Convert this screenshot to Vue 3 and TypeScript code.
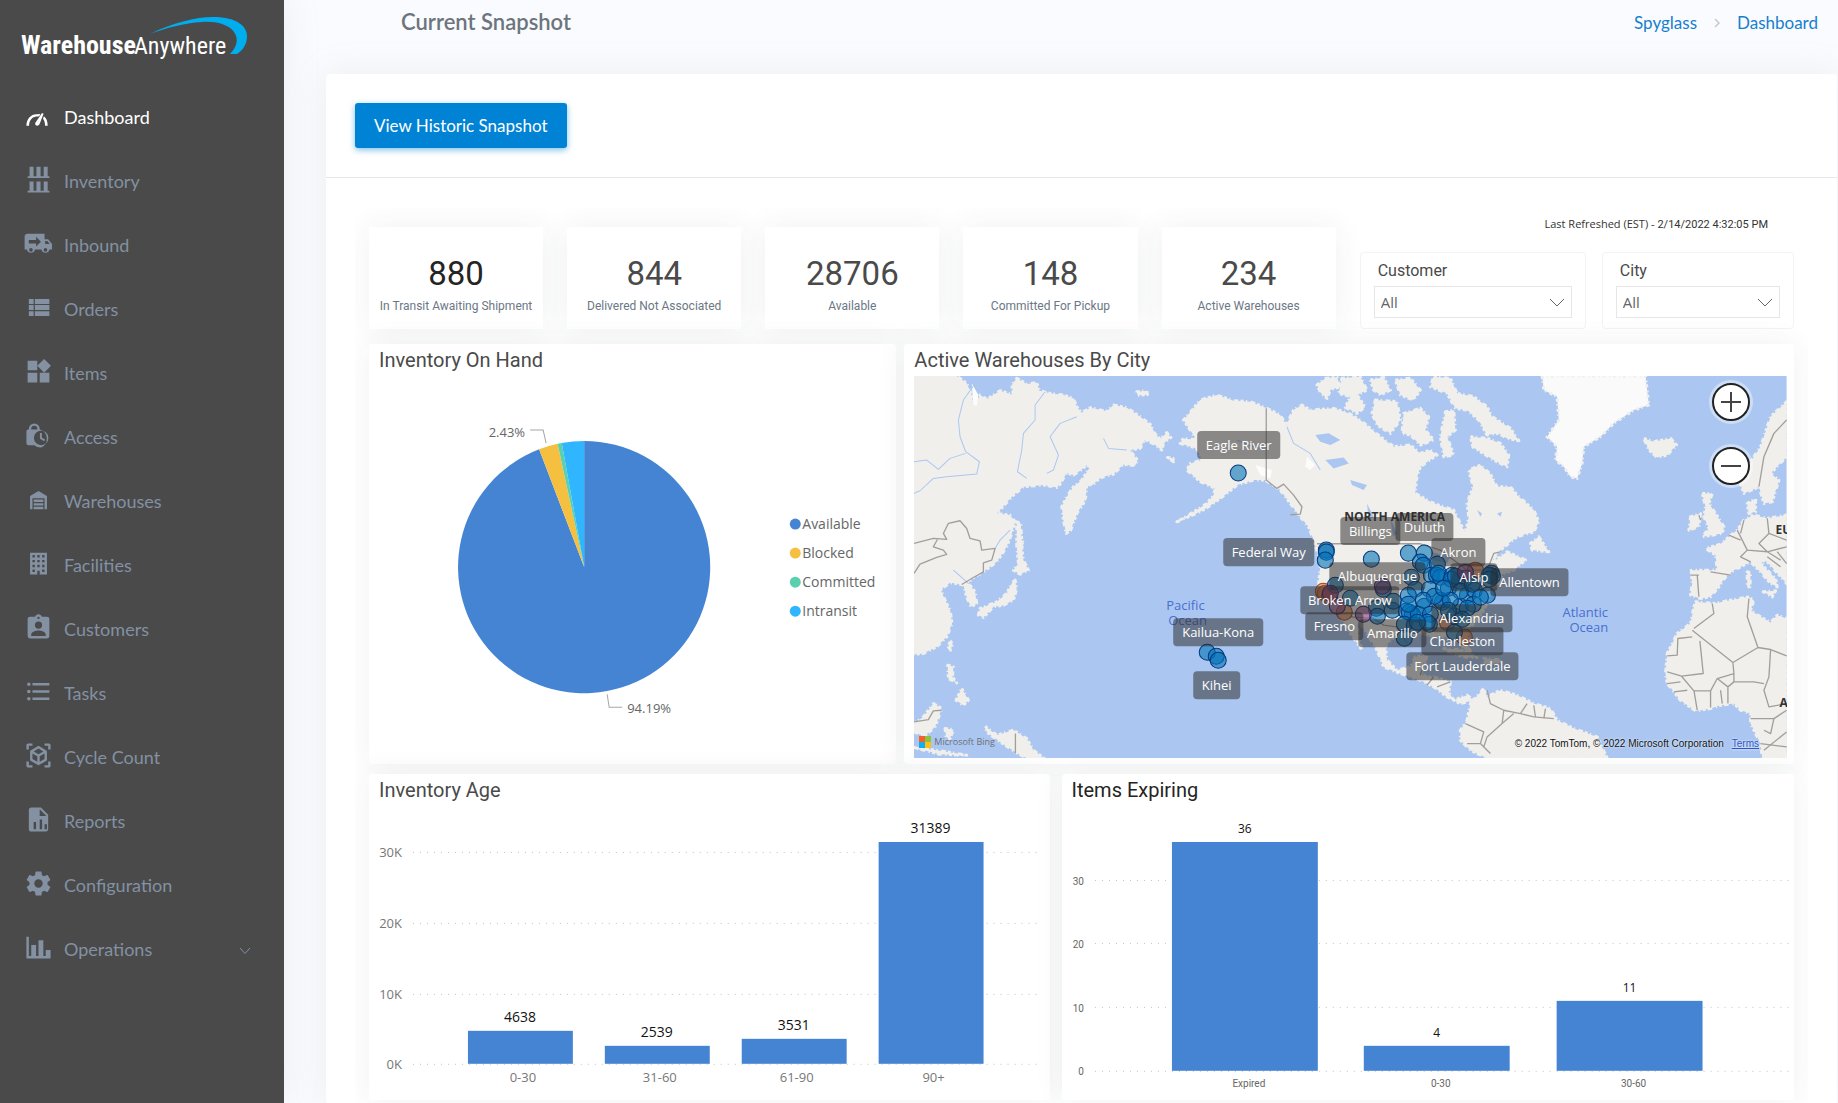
<script setup lang="ts">
import { ref } from 'vue'

interface NavItem { label: string; paths: string[] }
interface Bar { label: string; value: number }
interface Tag { text: string; x: number; y: number; w: number }

const nav: NavItem[] = [
  { label: 'Dashboard', paths: ['M2 20.500C2 15 5.500 11 10.500 11L13.500 10.800 12.600 12.700 10.600 12.800C6.800 13 4.200 16 4.200 20.500z', 'M14.900 10L16.200 10.500 12.800 19.300C12 21.200 8.600 20.600 9.300 18.300z', 'M16.500 12.700C18.600 14.200 19.600 17 19.600 20.500H17.400C17.400 18 16.900 16 15.700 14.700z'] },
  { label: 'Inventory', paths: ['M4.600 1.500H7.900V9.300H10.300V1.500H13.700V9.300H16.300V1.500H19.600V9.300H21V10.700H3V9.300H4.600z', 'M4.600 13.600H7.900V21.400H10.300V13.600H13.700V21.400H16.300V13.600H19.600V21.400H21V22.700H3V21.400H4.600z'] },
  { label: 'Inbound', paths: ['M3 4C1.500 4 .500 5 .500 6.500V17H2.500A3.300 3.300 0 0 0 9 17H14.500A3.300 3.300 0 0 0 21 17H23.200V12.500L20 8.500H17V4zM4 9H10V6.500L14 10.500 10 14.500V12H4zM17.500 10H19.300L21.300 12.500H17.500zM5.750 15.800A1.500 1.500 0 1 1 5.750 18.800 1.500 1.500 0 1 1 5.750 15.800M17.750 15.800A1.500 1.500 0 1 1 17.750 18.800 1.500 1.500 0 1 1 17.750 15.800'] },
  { label: 'Orders', paths: ['M9 5V9H21V5M9 19H21V15H9M9 14H21V10H9M4 9H8V5H4M4 19H8V15H4M4 14H8V10H4V14Z'] },
  { label: 'Items', paths: ['M3 3H11V11H3zM3 13H11V21H3zM13 13H21V21H13z', 'M16.660 1.690L22.310 7.340 16.660 13 11 7.340z'] },
  { label: 'Access', paths: ['M4 7V6.500A4.500 4.500 0 0 1 13 6.500V7A8 8 0 0 1 14.200 22 8 8 0 0 1 8.500 20H3.500A1.500 1.500 0 0 1 2 18.500V8.500A1.500 1.500 0 0 1 3.500 7zM6 7H11V6.500A2.500 2.500 0 0 0 6 6.500zM14.200 8A6 6 0 1 0 14.200 20 6 6 0 1 0 14.200 8M13.200 10H14.800V13.800L17.500 15.400 16.700 16.700 13.200 14.600z'] },
  { label: 'Warehouses', paths: ['M19 20H17V11H7V20H5V9L12 5L19 9V20M8 12H16V14H8V12M8 15H16V17H8V15M16 18V20H8V18H16Z'] },
  { label: 'Facilities', paths: ['M5 3V21H11V18H13V21H19V3H5M7 5H9V7H7V5M11 5H13V7H11V5M15 5H17V7H15V5M7 9H9V11H7V9M11 9H13V11H11V9M15 9H17V11H15V9M7 13H9V15H7V13M11 13H13V15H11V13M15 13H17V15H15V13M7 17H9V19H7V17M15 17H17V19H15V17Z'] },
  { label: 'Customers', paths: ['M12 3A1 1 0 0 1 13 4A1 1 0 0 1 12 5A1 1 0 0 1 11 4A1 1 0 0 1 12 3M19 3H14.820C14.400 1.840 13.300 1 12 1C10.700 1 9.600 1.840 9.180 3H5A2 2 0 0 0 3 5V19A2 2 0 0 0 5 21H19A2 2 0 0 0 21 19V5A2 2 0 0 0 19 3M12 7A3 3 0 0 1 15 10A3 3 0 0 1 12 13A3 3 0 0 1 9 10A3 3 0 0 1 12 7M18 19H6V17.600C6 15.600 10 14.500 12 14.500C14 14.500 18 15.600 18 17.600V19Z'] },
  { label: 'Tasks', paths: ['M7 5H21V7H7V5M7 13V11H21V13H7M7 19V17H21V19H7M4 4.500A1.500 1.500 0 0 1 4 7.500A1.500 1.500 0 0 1 4 4.500M4 10.500A1.500 1.500 0 0 1 4 13.500A1.500 1.500 0 0 1 4 10.500M4 16.500A1.500 1.500 0 0 1 4 19.500A1.500 1.500 0 0 1 4 16.500Z'] },
  { label: 'Cycle Count', paths: ['M17 22V20H20V17H22V20.500C22 21.300 21.300 22 20.500 22H17M7 22H3.500C2.700 22 2 21.300 2 20.500V17H4V20H7V22M17 2H20.500C21.300 2 22 2.700 22 3.500V7H20V4H17V2M7 2V4H4V7H2V3.500C2 2.700 2.700 2 3.500 2H7M13 17.250L17 14.950V10.360L13 12.660V17.250M12 10.920L16 8.630L12 6.280L8 8.630L12 10.920M7 14.950L11 17.250V12.660L7 10.360V14.950M18.230 7.590C18.730 7.910 19 8.340 19 8.910V15.230C19 15.800 18.730 16.230 18.230 16.550L12.750 19.730C12.250 20.050 11.750 20.050 11.250 19.730L5.770 16.550C5.270 16.230 5 15.800 5 15.230V8.910C5 8.340 5.270 7.910 5.770 7.590L11.250 4.410C11.750 4.150 12.250 4.150 12.750 4.410L18.230 7.590Z'] },
  { label: 'Reports', paths: ['M13 9H18.500L13 3.500V9M6 2H14L20 8V20A2 2 0 0 1 18 22H6C4.890 22 4 21.100 4 20V4C4 2.890 4.890 2 6 2M8 20H10V14H8V20M13 20H15V12H13V20M17 20H19V16H17V20Z'] },
  { label: 'Configuration', paths: ['M12 15.500A3.500 3.500 0 0 1 8.500 12A3.500 3.500 0 0 1 12 8.500A3.500 3.500 0 0 1 15.500 12A3.500 3.500 0 0 1 12 15.500M19.430 12.970C19.470 12.650 19.500 12.330 19.500 12C19.500 11.670 19.470 11.340 19.430 11L21.540 9.370C21.730 9.220 21.780 8.950 21.660 8.730L19.660 5.270C19.540 5.050 19.270 4.960 19.050 5.050L16.560 6.050C16.040 5.660 15.500 5.320 14.870 5.070L14.500 2.420C14.460 2.180 14.250 2 14 2H10C9.750 2 9.540 2.180 9.500 2.420L9.130 5.070C8.500 5.320 7.960 5.660 7.440 6.050L4.950 5.050C4.730 4.960 4.460 5.050 4.340 5.270L2.340 8.730C2.210 8.950 2.270 9.220 2.460 9.370L4.570 11C4.530 11.340 4.500 11.670 4.500 12C4.500 12.330 4.530 12.650 4.570 12.970L2.460 14.630C2.270 14.780 2.210 15.050 2.340 15.270L4.340 18.730C4.460 18.950 4.730 19.030 4.950 18.950L7.440 17.940C7.960 18.340 8.500 18.680 9.130 18.930L9.500 21.580C9.540 21.820 9.750 22 10 22H14C14.250 22 14.460 21.820 14.500 21.580L14.870 18.930C15.500 18.670 16.040 18.340 16.560 17.940L19.050 18.950C19.270 19.030 19.540 18.950 19.660 18.730L21.660 15.270C21.780 15.050 21.730 14.780 21.540 14.630L19.430 12.970Z'] },
  { label: 'Operations', paths: ['M22 21H2V3H4V19H6V10H10V19H12V6H16V19H18V14H22V21Z'] },
]
const active = ref('Dashboard')

const stats = [
  { value: '880', label: 'In Transit Awaiting Shipment' },
  { value: '844', label: 'Delivered Not Associated' },
  { value: '28706', label: 'Available' },
  { value: '148', label: 'Committed For Pickup' },
  { value: '234', label: 'Active Warehouses' },
]

// Pie
const shares = [
  { name: 'Available', pct: 94.19, color: '#4584d3' },
  { name: 'Blocked', pct: 2.43, color: '#f5c040' },
  { name: 'Committed', pct: 0.54, color: '#5bd0af' },
  { name: 'Intransit', pct: 2.84, color: '#30b5ff' },
]
const cx = 215
const cy = 191
const radius = 126
function point(pct: number): string {
  const a = (pct / 100) * Math.PI * 2
  return `${(cx + radius * Math.sin(a)).toFixed(2)} ${(cy - radius * Math.cos(a)).toFixed(2)}`
}
let acc = 0
const slices = shares.map((s) => {
  const from = acc
  acc += s.pct
  return { color: s.color, d: `M${cx} ${cy}L${point(from)}A${radius} ${radius} 0 ${s.pct > 50 ? 1 : 0} 1 ${point(acc)}Z` }
})

// Bar charts
const ageBars: Bar[] = [
  { label: '0-30', value: 4638 },
  { label: '31-60', value: 2539 },
  { label: '61-90', value: 3531 },
  { label: '90+', value: 31389 },
]
const ageBase = 258
const ageHeight = (v: number) => Math.round(v * 0.00707)
const expBars: Bar[] = [
  { label: 'Expired', value: 36 },
  { label: '0-30', value: 4 },
  { label: '30-60', value: 11 },
]
const expBase = 265
const expHeight = (v: number) => Math.round(v * 6.36)

// Map, in a 872 x 382 space
const tags: Tag[] = [
  { text: 'Eagle River', x: 283, y: 55, w: 83 },
  { text: 'Federal Way', x: 309, y: 162, w: 91 },
  { text: 'Kailua-Kona', x: 259, y: 242, w: 90 },
  { text: 'Kihei', x: 279, y: 295, w: 47 },
  { text: 'Billings', x: 426, y: 141, w: 60 },
  { text: 'Duluth', x: 481, y: 137, w: 58 },
  { text: 'Akron', x: 517, y: 162, w: 54 },
  { text: 'Albuquerque', x: 415, y: 186, w: 96 },
  { text: 'Alsip', x: 536, y: 187, w: 47 },
  { text: 'Allentown', x: 576, y: 192, w: 78 },
  { text: 'Broken Arrow', x: 386, y: 210, w: 99 },
  { text: 'Alexandria', x: 517, y: 228, w: 81 },
  { text: 'Fresno', x: 391, y: 236, w: 58 },
  { text: 'Amarillo', x: 444, y: 243, w: 68 },
  { text: 'Charleston', x: 507, y: 251, w: 82 },
  { text: 'Fort Lauderdale', x: 492, y: 276, w: 112 },
]
const blueDots: [number, number][] = [
  [324, 97], [293, 276], [302, 280], [304, 284],
  [412, 174], [412, 176], [411, 184], [457, 183], [494, 177], [510, 177], [506, 186], [509, 189], [523, 188],
  [421, 209], [436, 222], [462, 232], [463, 240], [478, 234], [469, 213], [497, 201], [501, 213], [494, 219],
  [517, 199], [522, 199], [526, 201], [524, 197], [538, 199], [515, 213], [534, 212], [528, 226], [526, 224], [510, 230], [492, 235],
  [498, 238], [495, 236], [504, 238], [516, 238], [490, 248], [500, 249], [515, 248], [513, 246], [490, 262], [540, 240], [546, 230],
  [553, 219], [560, 214], [573, 219], [559, 228], [553, 232], [540, 256], [577, 197], [578, 200], [575, 199], [520, 220],
  [545, 205], [551, 202], [479, 225], [494, 228], [546, 215], [575, 203], [536, 224], [509, 224], [548, 243],
  [537, 203], [541, 200], [529, 212], [558, 208], [566, 221], [503, 246], [534, 234],
]
const warmDots: [number, number][] = [[409, 215], [411, 217], [415, 220], [430, 236], [561, 194], [550, 261], [533, 246]]
const plumDots: [number, number][] = [[416, 217], [423, 230], [468, 210], [449, 238], [551, 196]]
</script>

<template>
  <div class="app">
    <aside class="sidebar">
      <svg class="logo" viewBox="0 0 284 85" role="img" aria-label="WarehouseAnywhere">
        <path d="M150 34C172 23 196 17 213 17C238 17 247 27 247 36C247 44 243 50 237 54H230C237 47 239 39 234 32C229 24 214 21 202 22C184 23 166 28 150 34Z" fill="#00aeef" />
        <text x="21" y="54" class="logo-bold">Warehouse</text>
        <text x="134" y="54" class="logo-thin">Anywhere</text>
      </svg>
      <nav>
        <a v-for="n in nav" :key="n.label" href="#" :class="{ active: n.label === active }" @click.prevent="active = n.label">
          <svg class="nav-icon" viewBox="0 0 24 24" fill="currentColor" fill-rule="evenodd">
            <path v-for="p in n.paths" :key="p" :d="p" />
          </svg>
          <span>{{ n.label }}</span>
          <svg v-if="n.label === 'Operations'" class="nav-more" viewBox="0 0 12 8" fill="none" stroke="currentColor"><path d="M1 1L6 6.500L11 1" /></svg>
        </a>
      </nav>
    </aside>

    <main>
      <header class="topbar">
        <h1>Current Snapshot</h1>
        <nav class="crumbs" aria-label="Breadcrumb">
          <a href="#">Spyglass</a>
          <svg viewBox="0 0 6 10" fill="none" stroke="#c3c8ce" stroke-width="1.500"><path d="M1 1L5 5L1 9" /></svg>
          <a href="#">Dashboard</a>
        </nav>
      </header>

      <section class="card">
        <div class="card-head"><button type="button" class="primary">View Historic Snapshot</button></div>
        <div class="card-body">
          <div class="report">
            <div class="row-top">
              <article v-for="s in stats" :key="s.label" class="stat">
                <strong>{{ s.value }}</strong>
                <span>{{ s.label }}</span>
              </article>
              <div class="filters">
                <p class="refreshed">Last Refreshed (EST) - <time>2/14/2022 4:32:05 PM</time></p>
                <div class="slicers">
                  <div class="slicer">
                    <label for="customer">Customer</label>
                    <div class="pick">
                      <select id="customer"><option>All</option></select>
                      <svg viewBox="0 0 16 9" fill="none" stroke="#666"><path d="M1 1L8 8L15 1" /></svg>
                    </div>
                  </div>
                  <div class="slicer">
                    <label for="city">City</label>
                    <div class="pick">
                      <select id="city"><option>All</option></select>
                      <svg viewBox="0 0 16 9" fill="none" stroke="#666"><path d="M1 1L8 8L15 1" /></svg>
                    </div>
                  </div>
                </div>
              </div>
            </div>

            <div class="row-mid">
              <article class="panel">
                <h2>Inventory On Hand</h2>
                <svg class="chart" viewBox="0 0 527 388">
                  <path v-for="s in slices" :key="s.color" :d="s.d" :fill="s.color" />
                  <g fill="none" stroke="#a6a6a6">
                    <path d="M161 54H174L177 67" />
                    <path d="M238 318L240 331H253" />
                  </g>
                  <text x="156" y="61" text-anchor="end" class="pct">2.43%</text>
                  <text x="258" y="337" class="pct">94.19%</text>
                  <g v-for="(s, i) in shares" :key="s.name">
                    <circle cx="426" :cy="148 + i * 29" r="5.500" :fill="s.color" />
                    <text x="433" :y="153 + i * 29" class="legend">{{ s.name }}</text>
                  </g>
                </svg>
              </article>

              <article class="panel">
                <h2>Active Warehouses By City</h2>
                <div class="map">
                  <svg class="chart" viewBox="0 0 872 382">
                    <rect width="872" height="382" fill="#abc7f1" />
                    <g transform="translate(-14 -6) scale(.33333)" stroke-linejoin="round">
                      <g fill="#f0efeb" stroke="#f0efeb" stroke-width="9" stroke-dasharray="9 7 4 11 14 6">
                        <path d="M42 18L170 18 200 40 213 70 222 108 240 75 260 88 300 62 340 75 335 45 350 25 380 42 410 38 418 62 450 70 490 75 520 85 530 110 545 128 570 113 620 124 640 105 680 113 720 140 752 165 765 192 780 207 800 188 812 202 790 220 785 240 760 222 735 208 720 235 688 240 712 270 705 287 670 283 640 312 600 323 575 347 560 340 557 380 550 400 530 430 512 480 498 490 490 450 485 410 500 380 520 350 545 330 570 290 560 285 540 302 520 315 500 308 480 342 470 352 430 345 370 350 340 375 290 430 330 435 345 455 335 490 320 530 290 575 250 605 215 625 205 640 225 665 230 700 212 710 200 680 190 645 170 640 150 638 122 658 135 690 150 720 156 760 140 800 110 830 70 850 42 852Z" />
                        <path d="M350 455L362 460 365 510 372 520 365 530 370 570 385 600 360 612 340 600 355 580 350 530ZM345 630L350 655 340 690 310 705 280 710 250 742 235 735 240 715 290 695 320 670 335 640ZM150 812L158 820 152 840 145 830ZM143 885L160 890 157 920 170 938 145 925ZM185 955L205 990 190 1005 168 990ZM42 1060L70 1040 100 1000 125 1015 105 1070 72 1098 42 1085ZM135 1075L160 1078 150 1105 138 1100ZM255 1068L290 1095 340 1080 380 1105 400 1140 432 1164 380 1164 350 1148 300 1115 260 1085ZM42 1132L110 1140 200 1155 120 1152ZM710 65L740 62 742 74 712 76ZM802 262L825 266 820 275Z" />
                        <path d="M850 150L880 115 900 90 950 75 1000 92 1050 95 1100 115 1140 135 1158 165 1180 120 1205 105 1230 120 1300 115 1345 130 1380 150 1440 200 1480 230 1530 225 1560 250 1590 240 1610 255 1560 290 1548 330 1545 370 1600 400 1660 420 1680 460 1695 490 1705 440 1700 400 1718 350 1705 300 1740 285 1770 312 1790 350 1830 350 1850 375 1900 420 1915 455 1900 485 1850 500 1800 540 1765 585 1820 545 1860 562 1875 570 1840 600 1805 612 1800 640 1770 660 1760 700 1740 740 1700 780 1705 830 1712 850 1698 850 1680 815 1640 800 1600 800 1560 790 1480 800 1455 830 1460 870 1490 900 1530 890 1545 860 1580 855 1570 900 1560 915 1600 920 1650 935 1645 965 1660 990 1700 975 1720 990 1680 1000 1640 980 1600 950 1560 930 1500 910 1450 890 1430 840 1400 790 1370 750 1375 800 1385 840 1350 790 1320 740 1270 690 1255 640 1260 590 1255 560 1240 510 1225 470 1200 440 1170 400 1140 360 1095 330 1060 330 1010 345 980 370 940 400 900 425 830 455 870 432 920 400 940 375 945 355 900 335 860 300 870 280 905 270 890 235 840 220 850 205 890 210Z" />
                        <path d="M1250 45L1275 25 1310 22 1320 50 1290 60 1280 85 1262 70ZM1325 25L1380 20 1400 60 1370 75 1395 110 1370 130 1335 112 1350 80 1315 70ZM1410 30L1450 22 1470 60 1440 75 1420 60ZM1425 90L1490 95 1500 150 1470 190 1430 165 1415 130ZM1510 130L1560 115 1585 140 1575 180 1600 210 1560 225 1530 195 1505 190ZM1485 30L1530 25 1560 60 1540 90 1500 75ZM1600 20L1650 25 1670 70 1720 80 1760 110 1775 140 1830 175 1855 212 1820 205 1795 190 1760 195 1735 150 1700 120 1665 115 1640 70 1590 50ZM1710 200L1760 205 1800 220 1825 255 1820 290 1780 270 1740 245 1718 232ZM1635 125L1660 120 1665 180 1640 200 1660 255 1630 260 1620 200ZM1890 520L1915 500 1945 545 1895 540Z" />
                        <path d="M1630 835L1680 838 1730 862 1700 862 1650 848ZM1750 865L1800 868 1795 880 1755 880Z" />
                        <path d="M1680 1080L1700 1050 1710 1000 1750 955 1760 980 1800 960 1850 975 1900 1000 1950 1015 1970 1050 2020 1075 2090 1100 2120 1164 1760 1164 1710 1140 1680 1110Z" />
                        <path d="M2385 695L2440 700 2490 690 2545 680 2560 690 2550 720 2580 740 2610 757 2630 735 2658 745 2658 1164 2585 1164 2580 1120 2550 1060 2550 1030 2520 1020 2500 1000 2460 1005 2430 1015 2385 1022 2340 990 2300 940 2295 910 2300 850 2330 790 2370 760 2380 710Z" />
                        <path d="M2658 435L2600 445 2560 435 2530 450 2510 480 2485 500 2460 522 2415 535 2445 555 2450 600 2372 600 2375 640 2370 675 2400 685 2430 680 2455 650 2475 620 2500 600 2550 575 2575 600 2610 640 2630 650 2625 625 2590 590 2580 570 2600 575 2640 620 2658 640ZM2658 95L2610 140 2580 230 2540 290 2515 330 2530 370 2575 350 2590 400 2615 395 2635 330 2610 310 2658 260ZM2540 400L2565 385 2565 425 2545 430ZM2405 370L2435 370 2425 400 2445 430 2470 470 2465 490 2405 500 2425 475 2410 440 2415 410ZM2370 440L2400 430 2395 470 2365 480ZM2230 205L2260 215 2310 205 2328 225 2300 255 2270 262 2245 240ZM2540 605L2550 608 2548 650 2540 650ZM2588 665L2625 662 2615 680Z" />
                      </g>
                      <path d="M1925 18L1930 60 1970 80 1975 150 1940 200 1970 230 1965 270 1990 290 2010 320 2030 325 2045 280 2050 230 2100 200 2140 160 2200 120 2245 105 2235 18Z" fill="#fafafa" stroke="#f0efeb" stroke-width="9" stroke-dasharray="9 7 4 11" />
                      <g fill="#fcfcfc">
                        <path d="M215 40L235 75 230 108 220 105ZM1220 260L1245 285 1230 300 1215 290ZM1065 285L1115 300 1110 325 1080 315Z" />
                      </g>
                      <g fill="#abc7f1">
                        <path d="M1245 195L1285 190 1320 210 1290 225 1260 215ZM1275 270L1330 262 1345 280 1300 295ZM1350 330L1400 345 1390 360 1355 345ZM1400 400L1420 440 1405 450ZM1470 445L1490 490 1478 500ZM1590 545L1650 560 1640 580 1600 570ZM1610 590L1625 595 1620 640 1608 635ZM1650 590L1680 600 1690 630 1665 625ZM1730 420L1745 430 1740 440ZM1790 430L1805 425 1800 440Z" />
                      </g>
                      <g fill="none" stroke="#abc7f1" stroke-width="3">
                        <path d="M222 45L190 90 175 150 180 200 197 245 238 275 230 312 140 320 100 325 60 362 42 370M42 275L80 270 115 298 150 265 197 250M435 65L405 105 405 150 370 190 365 240 352 305 380 325M530 140L480 160 450 200 475 255 460 300 440 310M610 205L625 235 680 240M205 640L160 600M1160 170L1180 220 1230 250 1260 300M1010 210L1060 230 1100 240M330 480L300 510 285 535" />
                      </g>
                      <g fill="none" stroke="#a29f9b" stroke-width="4">
                        <path d="M42 520L100 505 140 508 130 490 145 460 180 452 200 475 210 505 240 512 245 540 285 535 275 570 250 578 250 605 215 625 185 643M42 610L60 582 110 562 140 553 130 540 100 530 112 508M42 1055L85 1048 100 1022 125 1020M346 1090V1150" />
                        <path d="M1098 115V330L1130 355 1150 342 1180 375 1205 410 1200 432 1170 434" />
                        <path d="M1250 521H1560L1620 540 1700 600 1760 600 1780 550 1800 545M1350 740L1420 745 1450 765 1490 770 1520 820M1560 915L1570 880M1600 920L1580 945M1650 935L1610 950" />
                        <path d="M1760 960L1770 1000 1810 1020 1805 1060 1760 1100 1750 1130M1810 1020L1860 1030 1880 1000M1805 1060L1840 1030M1860 1030L1900 1040 1960 1045M1900 1005L1905 1040M1935 1015L1930 1045M1695 1060L1750 1085 1740 1120 1770 1150M1700 1120L1740 1120" />
                        <path d="M2380 775L2440 730 2435 700M2375 780L2497 877 2572 832 2540 740 2545 685M2398 812L2408 910 2343 918M2300 857L2330 855 2332 805 2375 800M2497 877L2500 910 2450 925M2572 832L2610 838 2658 857M2610 838L2605 920 2590 960 2605 1010 2658 1000M2500 935L2560 935 2590 940M2430 962V1012M2460 960L2465 1000M2482 950V1000M2380 960L2390 1020M2550 1045H2620L2610 1090 2590 1080M2300 905L2343 918 2380 962 2430 962 2450 925 2482 950 2500 935M2300 940L2340 935M2320 965L2360 960M2580 1120L2658 1130M2620 1045L2658 1020M2500 910L2500 935M2590 1140L2658 1085" />
                        <path d="M2510 480L2540 540 2520 560 2550 575M2530 450L2520 490M2600 445L2605 490 2575 520 2600 545 2658 530M2390 615L2395 680M2372 615H2395M2430 605L2490 615M2658 150L2620 190 2590 260 2575 350M2605 490L2658 510M2600 560L2640 590M2540 540L2600 545 2640 570M2485 495L2520 510M2630 545L2658 580M2395 435L2400 450" />
                      </g>
                    </g>
                    <text x="252" y="234" class="sea">Pacific</text>
                    <text x="254" y="249" class="sea">Ocean</text>
                    <text x="648" y="241" class="sea">Atlantic</text>
                    <text x="655" y="256" class="sea">Ocean</text>
                    <text x="430" y="145" class="continent">NORTH AMERICA</text>
                    <text x="861" y="158" class="continent">EU</text>
                    <text x="865" y="331" class="continent">A</text>
                    <circle v-for="(d, i) in warmDots" :key="'w' + i" :cx="d[0]" :cy="d[1]" r="8" fill="#d9642f" fill-opacity=".55" stroke="#a04a1c" />
                    <circle v-for="(d, i) in blueDots" :key="'b' + i" :cx="d[0]" :cy="d[1]" r="8" fill="#0272b8" fill-opacity=".6" stroke="#053a7c" />
                    <circle v-for="(d, i) in plumDots" :key="'p' + i" :cx="d[0]" :cy="d[1]" r="8" fill="#8a3f86" fill-opacity=".6" stroke="#3a2868" />
                    <g v-for="t in tags" :key="t.text">
                      <rect :x="t.x" :y="t.y" :width="t.w" height="28" rx="4" fill="#2b2b2b" fill-opacity=".52" />
                      <text :x="t.x + t.w / 2" :y="t.y + 19" text-anchor="middle" class="tag">{{ t.text }}</text>
                    </g>
                  </svg>
                  <div class="zoom">
                    <button type="button" aria-label="Zoom in"><svg viewBox="0 0 20 20" stroke="#444" stroke-width="2"><path d="M0 10H20M10 0V20" /></svg></button>
                    <button type="button" aria-label="Zoom out"><svg viewBox="0 0 20 20" stroke="#444" stroke-width="2"><path d="M0 10H20" /></svg></button>
                  </div>
                  <div class="brand">
                    <svg viewBox="0 0 12 12"><path fill="#f1622c" d="M0 0H6V6H0z" /><path fill="#8bc53f" d="M6 0H12V6H6z" /><path fill="#12aef0" d="M0 6H6V12H0z" /><path fill="#fdc116" d="M6 6H12V12H6z" /></svg>
                    <span>Microsoft Bing</span>
                  </div>
                  <div class="credit">
                    <span>© 2022 TomTom, © 2022 Microsoft Corporation</span>
                    <a href="#">Terms</a>
                  </div>
                </div>
              </article>
            </div>

            <div class="row-low">
              <article class="panel">
                <h2>Inventory Age</h2>
                <svg class="chart" viewBox="0 0 681 294">
                  <g v-for="(k, i) in ['30K', '20K', '10K', '0K']" :key="k">
                    <text x="33" :y="[51, 122, 193, 263][i]" text-anchor="end" class="axis">{{ k }}</text>
                    <path :d="`M44 ${[46, 117, 188, 258][i]}.500H671`" class="grid" />
                  </g>
                  <g v-for="(b, i) in ageBars" :key="b.label">
                    <rect :x="99 + i * 137" :y="ageBase - ageHeight(b.value)" width="105" :height="ageHeight(b.value)" fill="#4584d3" />
                    <text :x="151 + i * 137" :y="ageBase - ageHeight(b.value) - 9" text-anchor="middle" class="value">{{ b.value }}</text>
                    <text :x="154 + i * 137" y="276" text-anchor="middle" class="axis">{{ b.label }}</text>
                  </g>
                </svg>
              </article>
              <article class="panel">
                <h2 class="dark">Items Expiring</h2>
                <svg class="chart" viewBox="0 0 733 294">
                  <g v-for="(k, i) in ['30', '20', '10', '0']" :key="k">
                    <text x="22" :y="[79, 142, 206, 269][i]" text-anchor="end" class="axis-small">{{ k }}</text>
                    <path :d="`M33 ${[74, 137, 201, 265][i]}.500H727`" class="grid" />
                  </g>
                  <g v-for="(b, i) in expBars" :key="b.label">
                    <rect :x="[110, 302, 495][i]" :y="expBase - expHeight(b.value)" width="146" :height="expHeight(b.value)" fill="#4584d3" />
                    <text :x="[183, 375, 568][i]" :y="expBase - expHeight(b.value) - 9" text-anchor="middle" class="value-small">{{ b.value }}</text>
                    <text :x="[187, 379, 572][i]" y="281" text-anchor="middle" class="axis-small">{{ b.label }}</text>
                  </g>
                </svg>
              </article>
            </div>
          </div>
        </div>
      </section>
    </main>
  </div>
</template>

<style>
body { background: #fafbfe; }
</style>

<style scoped>
* { box-sizing: border-box; }
.app { display: flex; min-height: 100vh; font-family: Lato, sans-serif; font-size: 17px; }
a { text-decoration: none; }

.sidebar { flex: 0 0 284px; background: #4a4a4a; box-shadow: 0 0 35px rgba(154, 161, 171, 0.15); }
.logo { display: block; width: 284px; height: 85px; }
.logo text { font-family: "Liberation Sans Narrow", "Roboto Condensed", sans-serif; fill: #fff; }
.logo .logo-bold { font-size: 26px; font-weight: 700; }
.logo .logo-thin { font-size: 24px; }
.sidebar nav a { display: flex; align-items: center; height: 64px; padding: 0 33px 0 24px; font-size: 18px; color: #8391a2; }
.sidebar nav a.active { color: #fff; }
.nav-icon { width: 29px; height: 29px; margin: 0 11px 4px 0; }
.nav-more { width: 12px; height: 8px; margin: 4px 0 0 auto; }

main { flex: 1; min-width: 0; padding: 0 1px 0 42px; }
.topbar { display: flex; justify-content: space-between; align-items: flex-start; height: 74px; padding: 10px 19px 0 75px; }
h1 { margin: 0; font-size: 22px; line-height: 24px; font-weight: 600; color: #6c757d; }
.crumbs { display: flex; align-items: center; gap: 17px; line-height: 26px; }
.crumbs a { color: #1580d0; }
.crumbs svg { width: 6px; height: 10px; }

.card { background: #fff; border-radius: 4px; box-shadow: 0 0 35px rgba(154, 161, 171, 0.15); }
.card-head { padding: 29px; border-bottom: 1px solid #e5e7e9; }
.primary { display: block; height: 45px; padding: 0 19px 1px; border: 0; border-radius: 3px; background: #0082d5; color: #fff; font: 17px Lato, sans-serif; box-shadow: 0 2px 6px rgba(0, 130, 213, 0.5); }
.card-body { padding: 29px 29px 0; }

.report { display: flex; flex-direction: column; padding: 9px 14px 4px; overflow: hidden; font-family: Roboto, sans-serif; }
.row-top { display: grid; grid-template-columns: repeat(5, 174fr) 434fr; gap: 24px; align-items: end; margin-bottom: 15px; }
.stat { display: flex; flex-direction: column; align-items: center; height: 102px; padding-top: 27px; background: #fff; box-shadow: 0 0 30px rgba(40, 60, 60, 0.07); }
.stat strong { font-size: 33px; line-height: 40px; font-weight: 400; color: #4a4a4a; }
.stat:first-child strong { color: #252423; }
.stat span { font-size: 12px; line-height: 24px; color: #6b7785; white-space: nowrap; }
.refreshed { margin: 0 26px 19px 0; font: 11px/16px "Open Sans", sans-serif; text-align: right; color: #333; }
.refreshed time { font-family: Roboto, sans-serif; }
.slicers { display: grid; grid-template-columns: 226fr 192fr; gap: 16px; }
.slicer { height: 77px; padding: 8px 13px 0; border: 1px solid #f2f4f4; border-radius: 4px; }
.slicer label { display: block; margin: 0 0 5px 4px; font-size: 16px; line-height: 20px; color: #4a4a4a; }
.pick { position: relative; }
.pick select { display: block; width: 100%; height: 32px; padding: 0 6px; appearance: none; border: 1px solid #e6e6e6; border-radius: 0; background: #fff; font: 15px "Open Sans", sans-serif; color: #666; }
.pick svg { position: absolute; right: 7px; top: 12px; width: 16px; height: 9px; pointer-events: none; }

.row-mid { display: grid; grid-template-columns: 527fr 889fr; gap: 8px; margin-bottom: 10px; }
.row-low { display: grid; grid-template-columns: 681fr 733fr; gap: 12px; }
.panel { background: #fff; border-radius: 4px; box-shadow: 0 0 30px rgba(40, 60, 60, 0.07); }
.panel h2 { margin: 0; padding-left: 10px; font-size: 20px; line-height: 32px; font-weight: 400; color: #4a4a4a; }
.panel h2.dark { color: #252423; }
.chart { display: block; width: 100%; height: auto; }
.pct { font: 13px "Open Sans", sans-serif; fill: #666; }
.legend { font: 14px "Open Sans", sans-serif; fill: #666; }
.axis { font: 13px "Open Sans", sans-serif; fill: #777; }
.value { font: 14px "Open Sans", sans-serif; fill: #111; }
.axis-small { font: 10px Roboto, sans-serif; fill: #666; }
.value-small { font: 12px "Open Sans", sans-serif; fill: #111; }
.grid { stroke: #c0c0c0; stroke-dasharray: 1 6; }
.map { position: relative; margin: 0 7px 6px 10px; }
.sea { font: 13px "Open Sans", sans-serif; fill: #4a6fd0; }
.continent { font: 700 12px "Open Sans", sans-serif; fill: #333; }
.tag { font: 13px "Open Sans", sans-serif; fill: #fff; }
.zoom { position: absolute; top: 7px; right: 37px; display: flex; flex-direction: column; gap: 26px; }
.zoom button { display: flex; align-items: center; justify-content: center; width: 38px; height: 38px; padding: 0; border: 2px solid #222; border-radius: 50%; background: #fff; box-shadow: 0 0 0 3px rgba(255, 255, 255, 0.4); }
.zoom svg { width: 20px; height: 20px; }
.brand { position: absolute; left: 5px; bottom: 10px; display: flex; align-items: center; gap: 3px; font: 9px/12px "Open Sans", sans-serif; color: #6b6f76; }
.brand svg { width: 12px; height: 12px; }
.credit { position: absolute; right: 28px; bottom: 8px; display: flex; gap: 8px; font: 10px/12px "Liberation Sans", sans-serif; color: #111; text-shadow: 0 0 2px #fff; }
.credit a { color: #2f55c4; text-decoration: underline; }
</style>
